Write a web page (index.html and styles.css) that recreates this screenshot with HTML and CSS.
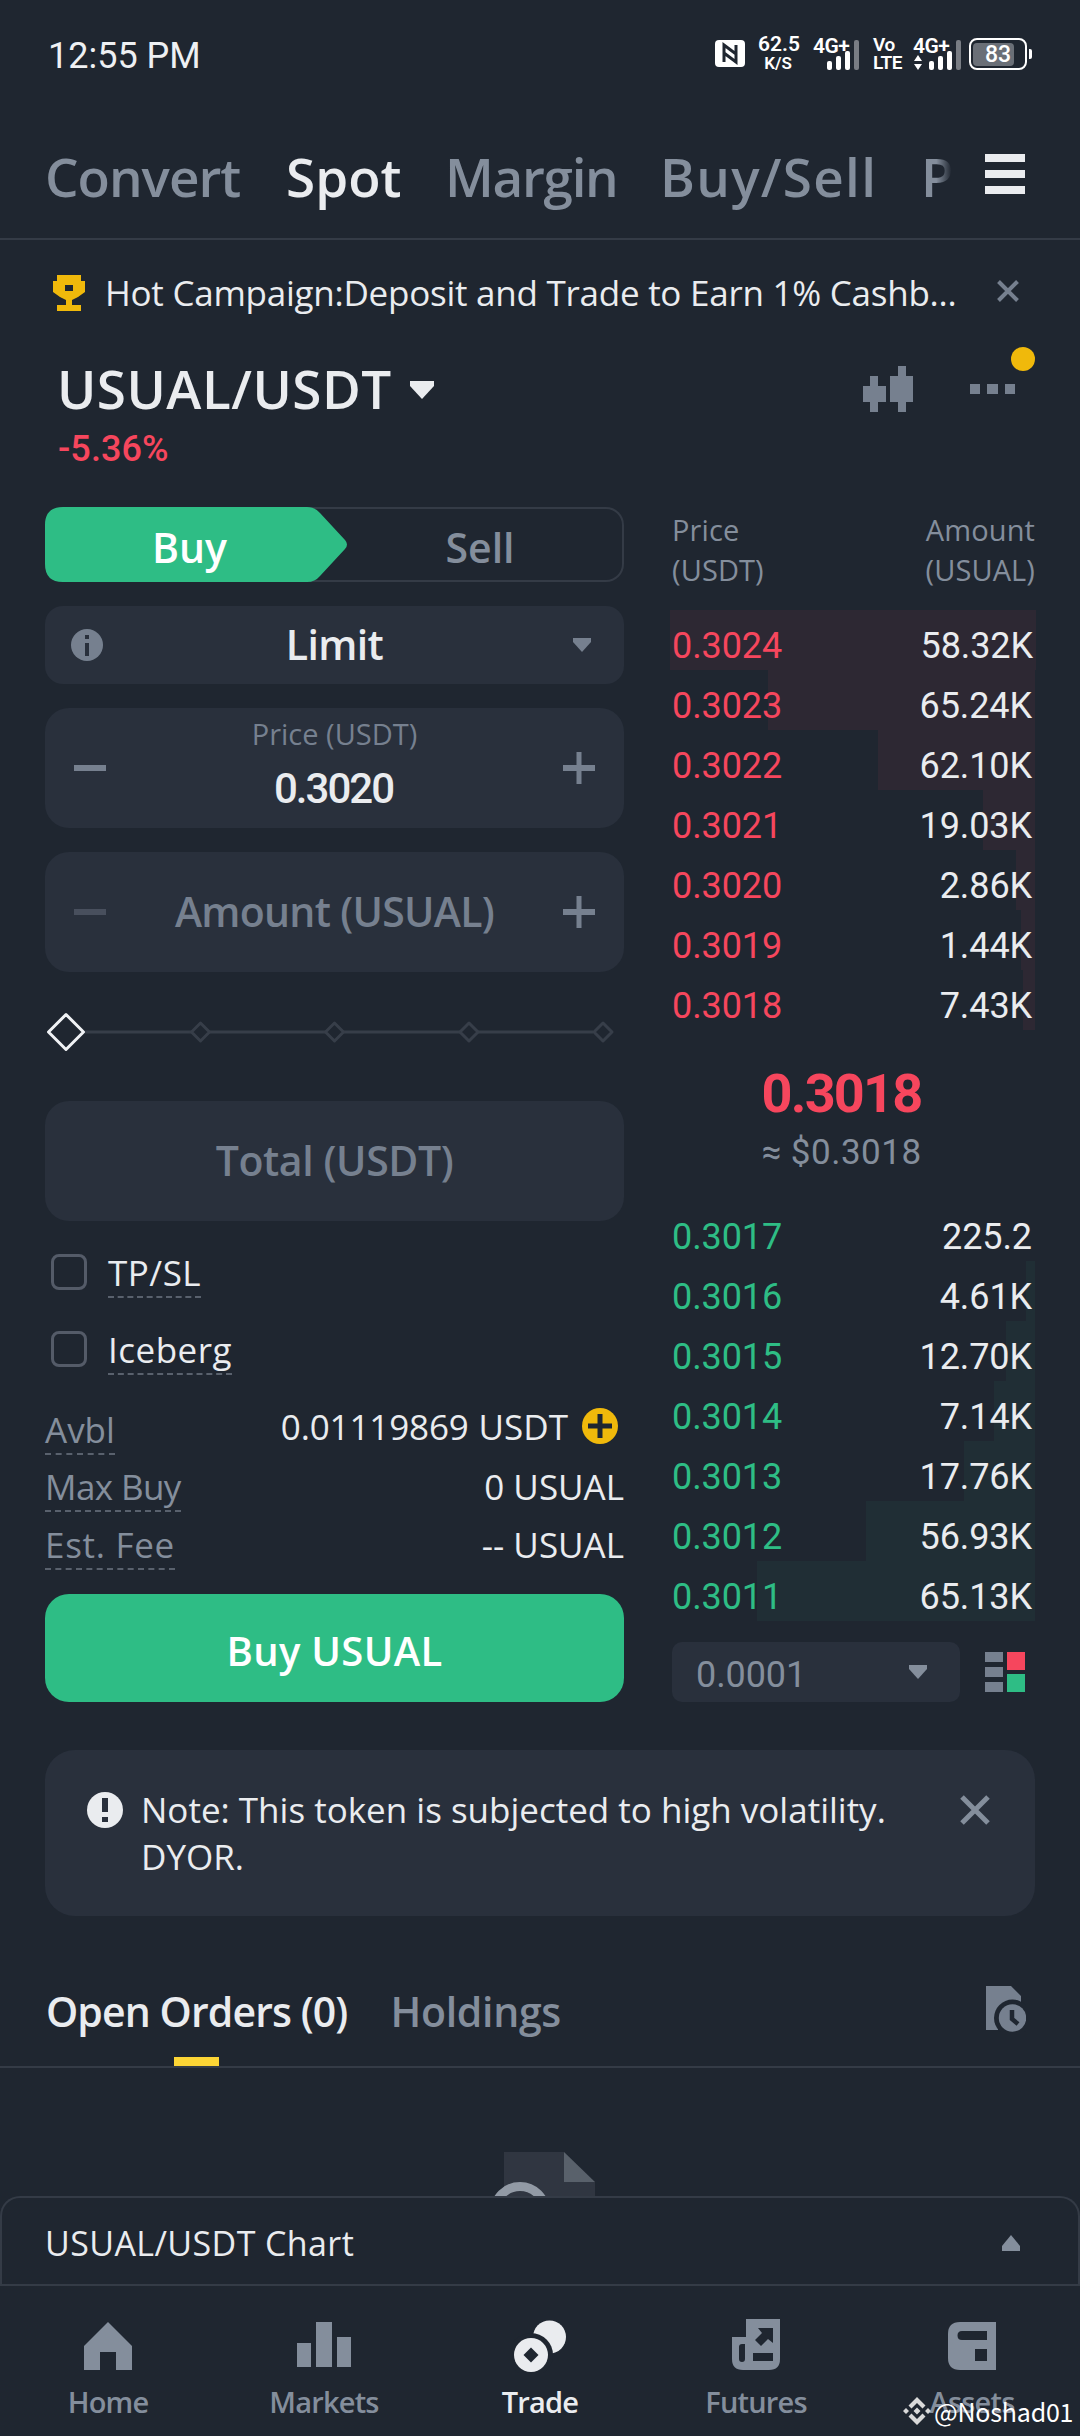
FILE: index.html
```html
<!DOCTYPE html>
<html lang="en">
<head>
    <meta charset="UTF-8">
    <meta name="viewport" content="width=device-width, initial-scale=1.0">
    <title>USUAL/USDT Spot</title>
    <link rel="stylesheet" href="styles.css">
</head>
<body>
    <div class="screen">
        <div class="status-bar">
            <span class="clock">12:55 PM</span>
            <div class="status-icons">
                <svg class="nfc" width="30" height="27" viewBox="0 0 30 27">
                    <rect width="30" height="27" rx="4" fill="#fff"/>
                    <path d="M9 22V5l12 9M21 5v17L9 13" fill="none" stroke="#1f2630" stroke-width="3"/>
                </svg>
                <div class="net-speed"><span>62.5</span><span class="unit">K/S</span></div>
                <div class="signal">
                    <span>4G+</span>
                    <svg width="34" height="30" viewBox="0 0 34 30">
                        <rect x="1" y="21" width="5" height="9" rx="2" fill="#fff"/>
                        <rect x="10" y="16" width="5" height="14" rx="2" fill="#fff"/>
                        <rect x="19" y="11" width="5" height="19" rx="2" fill="#fff"/>
                        <rect x="28" y="0" width="5" height="30" rx="2" fill="#797d84"/>
                    </svg>
                </div>
                <div class="volte"><span>Vo</span><span>LTE</span></div>
                <div class="signal">
                    <span>4G+</span>
                    <svg width="49" height="30" viewBox="-15 0 49 30">
                        <path d="M-10 15l4 6h-8zM-10 30l4-6h-8z" fill="#fff"/>
                        <rect x="1" y="21" width="5" height="9" rx="2" fill="#fff"/>
                        <rect x="10" y="16" width="5" height="14" rx="2" fill="#fff"/>
                        <rect x="19" y="11" width="5" height="19" rx="2" fill="#fff"/>
                        <rect x="28" y="0" width="5" height="30" rx="2" fill="#797d84"/>
                    </svg>
                </div>
                <div class="battery"><span class="battery-level"></span><span class="battery-text">83</span></div>
            </div>
        </div>

        <nav class="top-tabs">
            <a class="tab-convert">Convert</a>
            <a class="tab-spot active">Spot</a>
            <a class="tab-margin">Margin</a>
            <a class="tab-buysell">Buy/Sell</a>
            <a class="tab-cut">P</a>
            <svg class="menu" width="40" height="40" viewBox="0 0 40 40" fill="#eaecef">
                <path d="M0 0h40v8H0zM0 16h40v8H0zM0 32h40v8H0z"/>
            </svg>
        </nav>

        <div class="banner">
            <svg width="32" height="36" viewBox="0 0 32 36">
                <path fill="#f0b90b" fill-rule="evenodd" d="M4 0h24v6h4v11l-7 5-6 3v5h9v6H4v-6h9v-5l-6-3-7-5V6h4zM12 10v6h8v-6z"/>
            </svg>
            <span class="banner-text">Hot Campaign:Deposit and Trade to Earn 1% Cashb...</span>
            <svg class="banner-close" width="22" height="22" viewBox="0 0 22 22">
                <path d="M1.500 1.500l19 19M20.500 1.500l-19 19" stroke="#76808f" stroke-width="4"/>
            </svg>
        </div>

        <header class="pair">
            <div>
                <div class="pair-name">
                    <span>USUAL/USDT</span>
                    <svg width="24" height="18" viewBox="0 0 24 18" fill="#eaecef"><path d="M0 0h24v5L12 18 0 5z"/></svg>
                </div>
                <div class="pair-change">-5.36%</div>
            </div>
            <div class="pair-tools">
                <svg width="50" height="46" viewBox="0 0 50 46" fill="#76808f">
                    <path d="M7 10h8v10h8v16h-8v10H7V36H0V20h7zM35 0h8v10h7v26h-7v10h-8V36h-8V10h8z"/>
                </svg>
                <div class="more">
                    <i></i><i></i><i></i>
                    <span class="badge"></span>
                </div>
            </div>
        </header>

        <main class="trade">
            <section class="order-form">
                <div class="side-switch">
                    <svg class="side-bg" width="303" height="75" viewBox="0 0 303 75">
                        <path fill="#2ebd85" d="M18 0H262Q270 0 275 6L300 33Q304 37.500 300 42L275 69Q270 75 262 75H18Q0 75 0 57V18Q0 0 18 0z"/>
                    </svg>
                    <span class="side-buy">Buy</span>
                    <span class="side-sell">Sell</span>
                </div>

                <div class="field field-type">
                    <svg width="32" height="32" viewBox="0 0 32 32">
                        <circle cx="16" cy="16" r="16" fill="#76808f"/>
                        <path d="M14 6h4v4h-4zM14 14h4v13h-4z" fill="#29303c"/>
                    </svg>
                    <span class="field-text light">Limit</span>
                    <svg class="caret" width="18" height="14" viewBox="0 0 18 14" fill="#76808f"><path d="M0 0h18v4L9 14 0 4z"/></svg>
                </div>

                <div class="field field-tall">
                    <svg width="32" height="32" viewBox="0 0 32 32"><path d="M0 13h32v6H0z" fill="#76808f"/></svg>
                    <div class="field-stack">
                        <span class="field-label">Price (USDT)</span>
                        <span class="field-value">0.3020</span>
                    </div>
                    <svg width="32" height="32" viewBox="0 0 32 32"><path d="M0 13h13.500V0h5v13H32v6H18.500v13h-5V19H0z" fill="#76808f"/></svg>
                </div>

                <div class="field field-tall">
                    <svg width="32" height="32" viewBox="0 0 32 32"><path d="M0 13h32v6H0z" fill="#484f5d"/></svg>
                    <span class="field-text">Amount (USUAL)</span>
                    <svg width="32" height="32" viewBox="0 0 32 32"><path d="M0 13h13.500V0h5v13H32v6H18.500v13h-5V19H0z" fill="#76808f"/></svg>
                </div>

                <svg class="slider" width="579" height="40" viewBox="0 0 579 40" fill="#1f2630">
                    <path d="M40 20H548" stroke="#373e49" stroke-width="3"/>
                    <g stroke="#373e49" stroke-width="3" stroke-linejoin="round">
                        <path d="M155.500 11l9 9-9 9-9-9z"/>
                        <path d="M289.500 11l9 9-9 9-9-9z"/>
                        <path d="M424 11l9 9-9 9-9-9z"/>
                        <path d="M558 11l9 9-9 9-9-9z"/>
                    </g>
                    <path d="M21 2.500L38.500 20 21 37.500 3.500 20z" stroke="#f0f2f5" stroke-width="3" stroke-linejoin="round"/>
                </svg>

                <div class="field field-total">
                    <span class="field-text">Total (USDT)</span>
                </div>

                <label class="check"><span class="box"></span><span class="hint">TP/SL</span></label>
                <label class="check"><span class="box"></span><span class="hint">Iceberg</span></label>

                <div class="info">
                    <div class="info-row"><span class="info-key">Avbl</span>
                        <span class="info-val"><span class="balance">0.01119869</span> USDT
                            <svg width="36" height="36" viewBox="0 0 36 36">
                                <circle cx="18" cy="18" r="18" fill="#f0b90b"/>
                                <path d="M6 15.500h9.500V6h5v9.500H30v5h-9.500V30h-5v-9.500H6z" fill="#1f2630"/>
                            </svg>
                        </span>
                    </div>
                    <div class="info-row"><span class="info-key key-max">Max Buy</span><span class="info-val">0 USUAL</span></div>
                    <div class="info-row"><span class="info-key key-fee">Est. Fee</span><span class="info-val">-- USUAL</span></div>
                </div>

                <button class="buy-button">Buy USUAL</button>
            </section>

            <section class="book">
                <div class="book-head"><span>Price<br>(USDT)</span><span class="right">Amount<br>(USUAL)</span></div>
                <div class="asks">
                    <div class="row"><i style="width:366px"></i><b>0.3024</b><span>58.32K</span></div>
                    <div class="row"><i style="width:267px"></i><b>0.3023</b><span>65.24K</span></div>
                    <div class="row"><i style="width:157px"></i><b>0.3022</b><span>62.10K</span></div>
                    <div class="row"><i style="width:52px"></i><b>0.3021</b><span>19.03K</span></div>
                    <div class="row"><i style="width:19px"></i><b>0.3020</b><span>2.86K</span></div>
                    <div class="row"><i style="width:14px"></i><b>0.3019</b><span>1.44K</span></div>
                    <div class="row"><i style="width:12px"></i><b>0.3018</b><span>7.43K</span></div>
                </div>
                <div class="last">
                    <div class="last-price">0.3018</div>
                    <div class="last-fiat">≈ $0.3018</div>
                </div>
                <div class="bids">
                    <div class="row"><i style="width:0"></i><b>0.3017</b><span>225.2</span></div>
                    <div class="row"><i style="width:9px"></i><b>0.3016</b><span>4.61K</span></div>
                    <div class="row"><i style="width:29px"></i><b>0.3015</b><span>12.70K</span></div>
                    <div class="row"><i style="width:41px"></i><b>0.3014</b><span>7.14K</span></div>
                    <div class="row"><i style="width:71px"></i><b>0.3013</b><span>17.76K</span></div>
                    <div class="row"><i style="width:169px"></i><b>0.3012</b><span>56.93K</span></div>
                    <div class="row"><i style="width:278px"></i><b>0.3011</b><span>65.13K</span></div>
                </div>
                <div class="book-foot">
                    <div class="tick">
                        <span>0.0001</span>
                        <svg width="18" height="14" viewBox="0 0 18 14" fill="#848e9c"><path d="M0 0h18v4L9 14 0 4z"/></svg>
                    </div>
                    <svg width="40" height="40" viewBox="0 0 40 40">
                        <path d="M0 0h18v10H0zM0 15h18v10H0zM0 30h18v10H0z" fill="#76808f"/>
                        <path d="M22 0h18v18H22z" fill="#f6465d"/>
                        <path d="M22 22h18v18H22z" fill="#2ebd85"/>
                    </svg>
                </div>
            </section>
        </main>

        <div class="note">
            <svg width="36" height="36" viewBox="0 0 36 36">
                <circle cx="18" cy="18" r="18" fill="#eaecef"/>
                <path d="M15 6h6v14h-6zM15 25h6v5h-6z" fill="#29303c"/>
            </svg>
            <p>Note: This token is subjected to high volatility.<br>DYOR.</p>
            <svg class="note-close" width="30" height="30" viewBox="0 0 30 30">
                <path d="M2 2l26 26M28 2L2 28" stroke="#848e9c" stroke-width="5"/>
            </svg>
        </div>

        <div class="order-tabs">
            <a class="active">Open Orders (0)</a>
            <a class="tab-holdings">Holdings</a>
            <svg class="history" width="40" height="46" viewBox="0 0 40 46">
                <path fill="#76808f" d="M0 0h25l10 10v16H12v18H0z"/>
                <circle cx="26.500" cy="32" r="18.500" fill="#1f2630"/>
                <circle cx="26.500" cy="32" r="13.700" fill="#76808f"/>
                <path d="M26 24v9l6 5" fill="none" stroke="#1f2630" stroke-width="4.500"/>
            </svg>
        </div>

        <div class="empty">
            <svg width="110" height="50" viewBox="0 0 110 50">
                <path d="M18 0h60v30h31v20H18z" fill="#303641"/>
                <path d="M78 0l31 30H78z" fill="#59616b"/>
                <circle cx="34" cy="60" r="25.500" fill="#303641" stroke="#929aa5" stroke-width="9"/>
            </svg>
        </div>

        <div class="chart-sheet">
            <span>USUAL/USDT Chart</span>
            <svg width="18" height="16" viewBox="0 0 18 16" fill="#848e9c"><path d="M0 16h18v-5L9 0 0 11z"/></svg>
        </div>

        <footer class="bottom-nav">
            <a>
                <svg width="54" height="54" viewBox="0 0 54 54" fill="#848e9c"><path d="M3 27L27 3l24 24v24H35V33H19v18H3z"/></svg>
                <span>Home</span>
            </a>
            <a>
                <svg width="54" height="54" viewBox="0 0 54 54" fill="#848e9c"><path d="M0 24h14v24H0zM19 3h16v45H19zM40 18h14v30H40z"/></svg>
                <span>Markets</span>
            </a>
            <a class="active">
                <svg width="54" height="54" viewBox="0 0 54 54">
                    <circle cx="36.500" cy="18" r="16.500" fill="#eaecef"/>
                    <circle cx="18" cy="36" r="22" fill="#1f2630"/>
                    <circle cx="18" cy="36" r="17" fill="#eaecef"/>
                    <path d="M18 28.500l7.500 7.500-7.500 7.500-7.500-7.500z" fill="#1f2630"/>
                </svg>
                <span>Trade</span>
            </a>
            <a>
                <svg width="54" height="54" viewBox="0 0 54 54">
                    <path d="M3 18h14V0h34v40q0 11-11 11H14Q3 51 3 40z" fill="#848e9c"/>
                    <path d="M10 28q0-3 3-3h3v15q0 3-3 3t-3-3zM24 34h20v8H24zM29 9h15v15l-5-4-7 7-6-6 7-7z" fill="#1f2630"/>
                </svg>
                <span>Futures</span>
            </a>
            <a>
                <svg width="54" height="54" viewBox="0 0 54 54">
                    <path d="M15 3h36v48H15Q3 51 3 39V15Q3 3 15 3z" fill="#848e9c"/>
                    <path d="M17 12h25v9H17q-4.500 0-4.500-4.500T17 12zM30 30h12v12H30z" fill="#1f2630"/>
                </svg>
                <span>Assets</span>
            </a>
        </footer>

        <div class="watermark">
            <svg width="28" height="28" viewBox="0 0 28 28" fill="#d9d9d9">
                <path d="M14 0l8.500 8.500-3 3L14 6l-5.500 5.500-3-3zM14 28l8.500-8.500-3-3L14 22l-5.500-5.500-3 3zM14 10.500l3.500 3.500-3.500 3.500-3.500-3.500zM3 11l3 3-3 3-3-3zM25 11l3 3-3 3-3-3z"/>
            </svg>
            <span>@Noshad01</span>
        </div>
    </div>
</body>
</html>
```
FILE: styles.css
```css
* {
    box-sizing: border-box;
}
body {
    margin: 0;
    background: #1f2630;
    color: #eaecef;
    font-family: "Open Sans", "Noto Sans", sans-serif;
    font-size: 34px;
    white-space: nowrap;
}
.screen {
    position: relative;
    width: 1080px;
    height: 2436px;
    overflow: hidden;
    display: flex;
    flex-direction: column;
}
svg {
    display: block;
    flex: none;
}

/* status bar */
.status-bar {
    height: 110px;
    padding: 0 48px;
    display: flex;
    justify-content: space-between;
    font-family: Roboto, sans-serif;
    color: #fff;
}
.clock {
    line-height: 112px;
    font-size: 36px;
    color: #eef0f3;
}
.status-icons {
    display: flex;
    padding-top: 36px;
    font-weight: 600;
}
.nfc {
    margin: 4px 13px 0 0;
}
.net-speed {
    width: 40px;
    display: flex;
    flex-direction: column;
    text-align: center;
    font-size: 21px;
    line-height: 17px;
}
.net-speed .unit {
    font-size: 17px;
    line-height: 20px;
}
.signal {
    width: 47px;
    height: 34px;
    margin-left: 15px;
    display: grid;
}
.signal span,
.signal svg {
    grid-area: 1 / 1;
}
.signal span {
    font-size: 21px;
    line-height: 20px;
    letter-spacing: -0.500px;
}
.signal svg {
    margin-top: 4px;
    justify-self: end;
}
.volte {
    width: 30px;
    margin-left: 13px;
    display: flex;
    flex-direction: column;
    font-size: 19px;
    line-height: 18px;
    letter-spacing: -0.500px;
}
.volte + .signal {
    margin-left: 10px;
}
.battery {
    position: relative;
    width: 58px;
    height: 32px;
    margin: 2px 5px 0 9px;
    border: 2px solid #fff;
    border-radius: 8px;
}
.battery::after {
    content: "";
    position: absolute;
    left: 58px;
    top: 9px;
    width: 3px;
    height: 10px;
    background: #fff;
    border-radius: 0 2px 2px 0;
}
.battery-level {
    display: block;
    width: 41px;
    height: 23px;
    margin: 2.500px 2px;
    border-radius: 4px;
    background: #6a6f77;
}
.battery-text {
    position: absolute;
    left: 0;
    right: 0;
    top: 0;
    text-align: center;
    font-size: 23px;
    font-weight: 500;
    line-height: 29px;
}

/* product tabs */
.top-tabs {
    height: 130px;
    padding: 5px 55px 0 45px;
    border-bottom: 2px solid #343b46;
    display: flex;
    align-items: center;
    font-size: 53px;
    font-weight: 600;
    color: #848e9c;
}
.top-tabs a {
    flex: none;
}
.top-tabs .active {
    color: #eaecef;
}
.tab-convert {
    width: 241px;
    letter-spacing: -1px;
}
.tab-spot {
    width: 159px;
}
.tab-margin {
    width: 215px;
    letter-spacing: -1.300px;
}
.tab-buysell {
    width: 261px;
    letter-spacing: 1.300px;
}
.top-tabs .tab-cut {
    width: 34px;
    color: transparent;
    background: linear-gradient(90deg, #848e9c 45%, #1f2630 90%);
    -webkit-background-clip: text;
    background-clip: text;
}
.menu {
    margin: -5px 0 0 auto;
}

/* campaign banner */
.banner {
    height: 106px;
    padding: 0 61px 0 53px;
    display: flex;
    align-items: center;
}
.banner-text {
    margin: -2px 0 0 20px;
    font-size: 35px;
    letter-spacing: -0.250px;
}
.banner-close {
    margin: -4px 0 0 auto;
}

/* pair header */
.pair {
    height: 161px;
    padding: 0 46px 0 57px;
    display: flex;
    justify-content: space-between;
}
.pair-name {
    display: flex;
    align-items: center;
    gap: 18px;
    height: 88px;
    font-size: 53px;
    line-height: 84px;
    font-weight: 600;
    letter-spacing: 0.500px;
}
.pair-name span {
    margin-top: -2px;
}
.pair-change {
    padding-left: 1px;
    font-family: Roboto, sans-serif;
    font-size: 36px;
    line-height: 30px;
    font-weight: 500;
    letter-spacing: 0.100px;
    color: #f6465d;
}
.pair-tools {
    display: flex;
    gap: 57px;
    padding: 20px 19px 0 0;
}
.more {
    position: relative;
    display: flex;
    gap: 7px;
    padding-top: 18px;
}
.more i {
    width: 10.500px;
    height: 10px;
    background: #76808f;
}
.badge {
    position: absolute;
    right: -20px;
    top: -19px;
    width: 24px;
    height: 24px;
    border-radius: 50%;
    background: #f0b90b;
}

/* order form */
.trade {
    display: flex;
    justify-content: space-between;
    padding: 0 45px;
    height: 1195px;
}
.order-form {
    width: 579px;
}
.side-switch {
    height: 75px;
    display: grid;
    grid-template-columns: 289px 290px;
    border-radius: 18px;
    box-shadow: inset 0 0 0 2px #343b46;
    text-align: center;
    font-size: 41px;
    line-height: 80px;
    font-weight: 600;
}
.side-bg {
    grid-area: 1 / 1;
}
.side-buy {
    grid-area: 1 / 1;
    position: relative;
    color: #fff;
}
.side-sell {
    padding-left: 2px;
    color: #848e9c;
}
.field {
    margin-top: 24px;
    padding: 0 29px;
    display: flex;
    align-items: center;
    justify-content: space-between;
    background: #29303c;
    border-radius: 24px;
}
.field-type {
    height: 78px;
    padding: 0 33px 0 26px;
    border-radius: 18px;
}
.field-tall,
.field-total {
    height: 120px;
}
.field-total {
    margin-top: 0;
    justify-content: center;
}
.field-text {
    margin-top: -2px;
    font-size: 41px;
    font-weight: 600;
    letter-spacing: -0.700px;
    color: #76808f;
}
.field-total .field-text {
    letter-spacing: -0.400px;
}
.field-text.light {
    margin-right: 7px;
    letter-spacing: -0.600px;
    color: #eaecef;
}
.field-stack {
    display: flex;
    flex-direction: column;
    text-align: center;
}
.field-label {
    font-size: 29px;
    line-height: 54px;
    margin-top: -12px;
    color: #76808f;
}
.field-value {
    font-family: Roboto, sans-serif;
    font-size: 42px;
    line-height: 56px;
    padding-right: 2px;
    font-weight: 500;
    letter-spacing: -2px;
}
.slider {
    margin: 40px 0 49px;
}
.check {
    height: 77px;
    display: flex;
    align-items: center;
    padding-left: 6px;
    font-size: 35px;
    letter-spacing: 0.500px;
}
.field-total + .check {
    margin-top: 12px;
}
.box {
    width: 36px;
    height: 36px;
    margin-right: 21px;
    border: 3px solid #545b68;
    border-radius: 8px;
}
.hint,
.info-key {
    line-height: 46px;
    padding-top: 2px;
    border-bottom: 2px dashed #59616d;
}
.hint {
    margin-top: 2px;
}
.info {
    margin-top: 13px;
    font-size: 35px;
}
.info-row {
    height: 58px;
    display: flex;
    align-items: center;
    justify-content: space-between;
}
.info-key {
    color: #848e9c;
}
.info-row:first-child .info-key {
    margin-top: 1px;
}
.key-max {
    letter-spacing: -0.600px;
}
.key-fee {
    letter-spacing: 0.700px;
}
.info-val {
    display: flex;
    align-items: center;
    gap: 10px;
    margin-top: -1px;
}
.info-row:first-child .info-val {
    margin-top: -5px;
}
.info-val svg {
    margin: -1px 6px 0 4px;
}
.balance {
    letter-spacing: -0.150px;
}
.buy-button {
    width: 100%;
    height: 108px;
    margin-top: 20px;
    padding: 5px 0 0;
    border: none;
    border-radius: 24px;
    background: #2ebd85;
    color: #fff;
    font: 600 40px "Open Sans", sans-serif;
    letter-spacing: 0.300px;
}

/* order book */
.book {
    width: 365px;
    font-family: Roboto, sans-serif;
    font-size: 36px;
    letter-spacing: -0.100px;
}
.book-head {
    height: 103px;
    padding: 3px 0 0 2px;
    display: flex;
    justify-content: space-between;
    font-family: "Open Sans", sans-serif;
    font-size: 29px;
    line-height: 40px;
    letter-spacing: 0.100px;
    color: #848e9c;
}
.right {
    text-align: right;
}
.row {
    height: 60px;
    display: grid;
    grid-template-columns: 1fr 1fr;
    line-height: 73px;
}
.row i {
    grid-area: 1 / 1 / 2 / 3;
    justify-self: end;
    height: 60px;
}
.row b {
    grid-area: 1 / 1;
    padding-left: 2px;
    font-weight: 400;
}
.row span {
    grid-area: 1 / 2;
    text-align: right;
    padding-right: 3px;
}
.asks i {
    background: #2d2833;
}
.asks b,
.last-price {
    color: #f6465d;
}
.bids i {
    background: #202e35;
}
.bids b {
    color: #2ebd85;
}
.last {
    height: 171px;
    padding: 30px 22px 0 0;
    text-align: center;
}
.last-price {
    font-size: 54px;
    line-height: 68px;
    font-weight: 700;
    letter-spacing: -1.800px;
}
.last-fiat {
    font-size: 35px;
    line-height: 50px;
    letter-spacing: 0.500px;
    color: #848e9c;
}
.book-foot {
    height: 60px;
    margin-top: 21px;
    padding: 0 10px 0 2px;
    display: flex;
    align-items: center;
    justify-content: space-between;
}
.tick {
    width: 288px;
    height: 60px;
    padding: 5px 33px 0 24px;
    display: flex;
    align-items: center;
    justify-content: space-between;
    background: #29303c;
    border-radius: 10px;
    color: #848e9c;
}
.tick svg {
    margin-top: -5px;
}

/* volatility note */
.note {
    height: 166px;
    margin: 48px 45px 0;
    padding: 42px 45px 0 42px;
    display: flex;
    background: #29303c;
    border-radius: 30px;
}
.note p {
    margin: -6px 0 0 18px;
    font-size: 35px;
    line-height: 47px;
}
.note-close {
    margin: 3px 0 0 auto;
}

/* open orders */
.order-tabs {
    height: 152px;
    padding: 60px 54px 0 46px;
    display: flex;
    border-bottom: 2px solid #343b46;
    font-size: 41px;
    line-height: 70px;
    font-weight: 600;
    color: #848e9c;
}
.order-tabs .active {
    height: 90px;
    margin-right: 43px;
    color: #eaecef;
    letter-spacing: -0.900px;
    background: linear-gradient(#fcd535, #fcd535) center bottom / 45px 9px no-repeat;
}
.tab-holdings {
    letter-spacing: -0.300px;
}
.history {
    margin: 10px 0 0 auto;
}
.empty {
    height: 128px;
    padding: 84px 0 0 486px;
    overflow: hidden;
}

.chart-sheet {
    height: 88px;
    padding: 3px 58px 0 43px;
    display: flex;
    align-items: center;
    justify-content: space-between;
    border: 2px solid #343b46;
    border-bottom: none;
    border-radius: 20px 20px 0 0;
    font-size: 34px;
    letter-spacing: 0.400px;
}
.bottom-nav {
    height: 152px;
    border-top: 2px solid #343b46;
    display: grid;
    grid-template-columns: repeat(5, 1fr);
    font-size: 29px;
    font-weight: 600;
    letter-spacing: -0.800px;
    color: #848e9c;
}
.bottom-nav a {
    padding-top: 33px;
    display: flex;
    flex-direction: column;
    align-items: center;
}
.bottom-nav span {
    margin-top: 9px;
    line-height: 40px;
}
.bottom-nav .active {
    color: #eaecef;
}
.watermark {
    position: absolute;
    left: 903px;
    bottom: 7px;
    display: flex;
    align-items: center;
    gap: 3px;
    color: #fff;
    font-family: "Noto Sans CJK SC", "Noto Sans", sans-serif;
    font-size: 25px;
    line-height: 36px;
    letter-spacing: -0.200px;
}
```
